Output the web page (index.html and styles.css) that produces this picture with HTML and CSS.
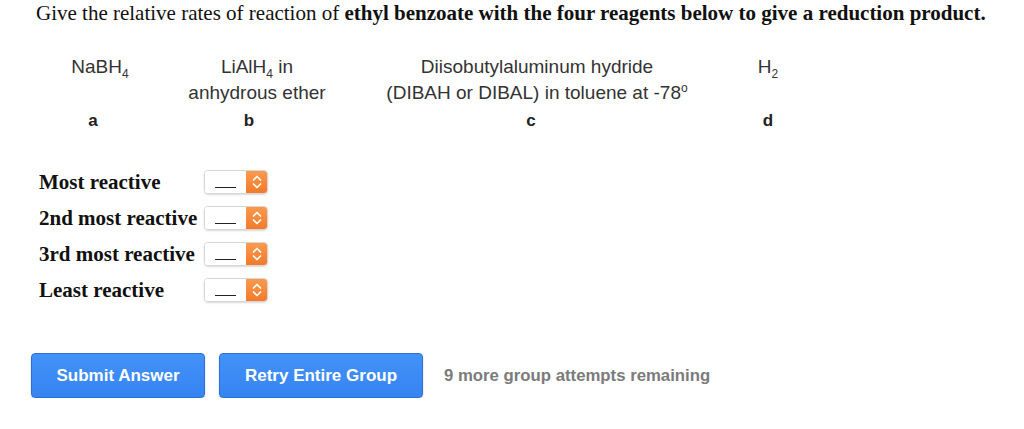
FILE: index.html
```html
<!DOCTYPE html>
<html lang="en">
<head>
  <meta charset="UTF-8">
  <title>Relative Rates of Reduction</title>
  <link rel="stylesheet" href="styles.css">
</head>
<body>

<div class="question">
  <p class="prompt">Give the relative rates of reaction of <b>ethyl benzoate with the four reagents below to give a reduction product.</b></p>

  <div class="reagents">
    <div class="reagent">NaBH<sub>4</sub></div>
    <div class="reagent">LiAlH<sub>4</sub> in<br>anhydrous ether</div>
    <div class="reagent">Diisobutylaluminum hydride<br>(DIBAH or DIBAL) in toluene at -78<sup>o</sup></div>
    <div class="reagent">H<sub>2</sub></div>
  </div>
  <div class="letters">
    <div class="letter">a</div>
    <div class="letter">b</div>
    <div class="letter">c</div>
    <div class="letter">d</div>
  </div>

  <div class="ranking">
    <label>Most reactive</label>
    <div class="picker"><span class="blank"></span><span class="arrows"><svg width="12" height="16" viewBox="0 0 12 16"><path d="M2.5 6 L6 2.5 L9.5 6 M2.5 10 L6 13.5 L9.5 10" fill="none" stroke="#fff" stroke-width="1.7" stroke-linecap="round" stroke-linejoin="round"/></svg></span></div>
    <label>2nd most reactive</label>
    <div class="picker"><span class="blank"></span><span class="arrows"><svg width="12" height="16" viewBox="0 0 12 16"><path d="M2.5 6 L6 2.5 L9.5 6 M2.5 10 L6 13.5 L9.5 10" fill="none" stroke="#fff" stroke-width="1.7" stroke-linecap="round" stroke-linejoin="round"/></svg></span></div>
    <label>3rd most reactive</label>
    <div class="picker"><span class="blank"></span><span class="arrows"><svg width="12" height="16" viewBox="0 0 12 16"><path d="M2.5 6 L6 2.5 L9.5 6 M2.5 10 L6 13.5 L9.5 10" fill="none" stroke="#fff" stroke-width="1.7" stroke-linecap="round" stroke-linejoin="round"/></svg></span></div>
    <label>Least reactive</label>
    <div class="picker"><span class="blank"></span><span class="arrows"><svg width="12" height="16" viewBox="0 0 12 16"><path d="M2.5 6 L6 2.5 L9.5 6 M2.5 10 L6 13.5 L9.5 10" fill="none" stroke="#fff" stroke-width="1.7" stroke-linecap="round" stroke-linejoin="round"/></svg></span></div>
  </div>

  <div class="actions">
    <button type="button">Submit Answer</button>
    <button type="button" class="retry">Retry Entire Group</button>
    <span class="attempts">9 more group attempts remaining</span>
  </div>
</div>

</body>
</html>
```

FILE: styles.css
```css
body {
  margin: 0;
  background-color: #fff;
  font-family: "Liberation Serif", "Times New Roman", serif;
  color: #111;
}
.question {
  padding: 0 0 0 36px;
}
.prompt {
  margin: 0;
  padding-top: 1px;
  font-size: 21px;
  line-height: 24px;
  white-space: nowrap;
}
.reagents,
.letters {
  display: grid;
  font-family: "Liberation Sans", Arial, sans-serif;
  color: #333;
  text-align: center;
}
.reagents {
  grid-template-columns: 128px 186px 374px 88px;
  margin-top: 29px;
}
.reagent {
  font-size: 19px;
  line-height: 26px;
  white-space: nowrap;
}
sub, sup {
  font-size: 12px;
  line-height: 0;
}
.letters {
  grid-template-columns: 114px 198px 366px 108px;
  margin-top: 5px;
  color: #222;
}
.letter {
  font-size: 17px;
  font-weight: bold;
  line-height: 20px;
}
.ranking {
  display: grid;
  grid-template-columns: 165px auto;
  grid-auto-rows: 24px;
  justify-content: start;
  align-items: center;
  row-gap: 12px;
  margin-top: 39px;
  padding-left: 3px;
}
.ranking label {
  font-size: 21px;
  font-weight: bold;
  line-height: 24px;
  white-space: nowrap;
}
.picker {
  display: flex;
  width: 64px;
  height: 24px;
  border: 1px solid #d6d6d6;
  border-radius: 4px;
  box-shadow: 0 1px 2px rgba(0, 0, 0, 0.15);
  overflow: hidden;
  box-sizing: border-box;
}
.blank {
  flex: 1;
  position: relative;
  background: #fff;
}
.blank::after {
  content: "";
  position: absolute;
  left: 10px;
  right: 10px;
  bottom: 5px;
  border-bottom: 1.5px solid #222;
}
.arrows {
  width: 21px;
  display: flex;
  align-items: center;
  justify-content: center;
  background: linear-gradient(#fb9a4e, #f47a2a);
}
.actions {
  display: flex;
  align-items: center;
  gap: 14px;
  margin-top: 51px;
  margin-left: -5px;
  font-family: "Liberation Sans", Arial, sans-serif;
}
button {
  height: 45px;
  width: 174px;
  border: 1px solid #2b6fd9;
  border-radius: 4px;
  background: linear-gradient(#4392f8, #3584f2);
  color: #fff;
  font-family: "Liberation Sans", Arial, sans-serif;
  font-size: 17px;
  font-weight: bold;
  cursor: pointer;
  box-shadow: 0 1px 2px rgba(0, 0, 0, 0.2);
}
button.retry {
  width: 204px;
}
.attempts {
  margin-left: 7px;
  color: #7b7b7b;
  font-size: 16.75px;
  font-weight: bold;
}
```
